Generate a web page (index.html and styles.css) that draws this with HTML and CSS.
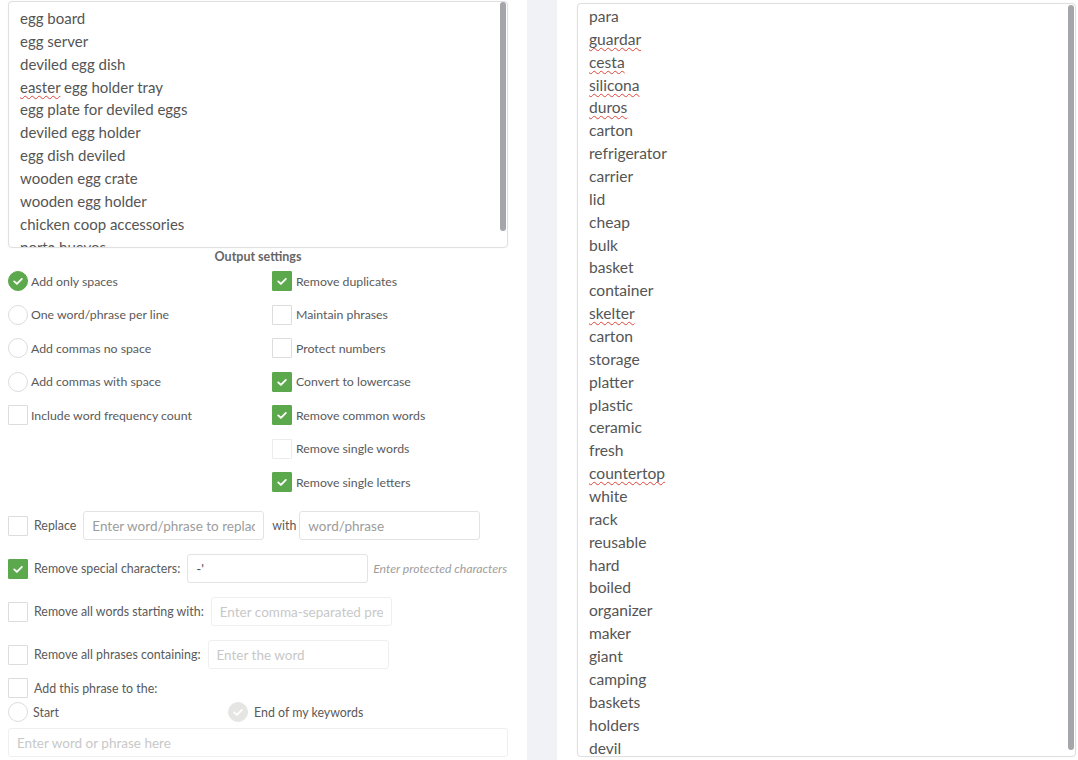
FILE: index.html
```html
<!DOCTYPE html>
<html>
<head>
<meta charset="utf-8">
<link rel="stylesheet" href="styles.css">
</head>
<body>
<div class="page">
  <div class="left">
    <div class="ta-wrap ta-left-wrap">
      <div class="ta ta-left">
        <div>egg board</div>
        <div>egg server</div>
        <div>deviled egg dish</div>
        <div><span class="sp">easter</span> egg holder tray</div>
        <div>egg plate for deviled eggs</div>
        <div>deviled egg holder</div>
        <div>egg dish deviled</div>
        <div>wooden egg crate</div>
        <div>wooden egg holder</div>
        <div>chicken coop accessories</div>
        <div>porta huevos</div>
        <div>egg holder for refrigerator</div>
      </div>
      <div class="thumb thumb-left"></div>
    </div>
    <div class="settings-title">Output settings</div>
    <div class="options">
      <div class="col">
        <label class="opt"><span class="radio on"><svg viewBox="0 0 20 20"><polyline points="5.8,10.4 8.8,13.3 14.3,7.6"/></svg></span>Add only spaces</label>
        <label class="opt"><span class="radio"></span>One word/phrase per line</label>
        <label class="opt"><span class="radio"></span>Add commas no space</label>
        <label class="opt"><span class="radio"></span>Add commas with space</label>
        <label class="opt"><span class="box"></span>Include word frequency count</label>
      </div>
      <div class="col col-r">
        <label class="opt"><span class="box on"><svg viewBox="0 0 20 20"><polyline points="5.8,10.4 8.8,13.3 14.3,7.6"/></svg></span>Remove duplicates</label>
        <label class="opt"><span class="box"></span>Maintain phrases</label>
        <label class="opt"><span class="box"></span>Protect numbers</label>
        <label class="opt"><span class="box on"><svg viewBox="0 0 20 20"><polyline points="5.8,10.4 8.8,13.3 14.3,7.6"/></svg></span>Convert to lowercase</label>
        <label class="opt"><span class="box on"><svg viewBox="0 0 20 20"><polyline points="5.8,10.4 8.8,13.3 14.3,7.6"/></svg></span>Remove common words</label>
        <label class="opt"><span class="box faint"></span>Remove single words</label>
        <label class="opt"><span class="box on"><svg viewBox="0 0 20 20"><polyline points="5.8,10.4 8.8,13.3 14.3,7.6"/></svg></span>Remove single letters</label>
      </div>
    </div>
    <div class="extra">
      <div class="row">
        <span class="box"></span><span class="lbl">Replace</span>
        <input class="field" placeholder="Enter word/phrase to replace">
        <span class="with">with</span>
        <input class="field field-with" placeholder="word/phrase">
      </div>
      <div class="row">
        <span class="box on"><svg viewBox="0 0 20 20"><polyline points="5.8,10.4 8.8,13.3 14.3,7.6"/></svg></span><span class="lbl">Remove special characters:</span>
        <input class="field" value="-'">
        <span class="hint">Enter protected characters</span>
      </div>
      <div class="row">
        <span class="box"></span><span class="lbl">Remove all words starting with:</span>
        <input class="field dim" placeholder="Enter comma-separated prefixes">
      </div>
      <div class="row">
        <span class="box"></span><span class="lbl">Remove all phrases containing:</span>
        <input class="field dim" placeholder="Enter the word">
      </div>
      <div class="row row-add">
        <span class="box"></span><span class="lbl">Add this phrase to the:</span>
      </div>
      <div class="row row-pos">
        <span class="pos"><span class="radio"></span><span class="lbl">Start</span></span>
        <span class="pos"><span class="radio dis"><svg viewBox="0 0 20 20"><polyline points="5.8,10.4 8.8,13.3 14.3,7.6"/></svg></span><span class="lbl">End of my keywords</span></span>
      </div>
      <input class="field dim wide" placeholder="Enter word or phrase here">
    </div>
  </div>
  <div class="gutter"></div>
  <div class="right">
    <div class="ta-wrap ta-right-wrap">
      <div class="ta ta-right">
        <div>para</div>
        <div><span class="sp">guardar</span></div>
        <div><span class="sp">cesta</span></div>
        <div><span class="sp">silicona</span></div>
        <div><span class="sp">duros</span></div>
        <div>carton</div>
        <div>refrigerator</div>
        <div>carrier</div>
        <div>lid</div>
        <div>cheap</div>
        <div>bulk</div>
        <div>basket</div>
        <div>container</div>
        <div><span class="sp">skelter</span></div>
        <div>carton</div>
        <div>storage</div>
        <div>platter</div>
        <div>plastic</div>
        <div>ceramic</div>
        <div>fresh</div>
        <div><span class="sp">countertop</span></div>
        <div>white</div>
        <div>rack</div>
        <div>reusable</div>
        <div>hard</div>
        <div>boiled</div>
        <div>organizer</div>
        <div>maker</div>
        <div>giant</div>
        <div>camping</div>
        <div>baskets</div>
        <div>holders</div>
        <div>devil</div>
        <div>tray</div>
      </div>
      <div class="thumb thumb-right"></div>
    </div>
  </div>
</div>
</body>
</html>
```

FILE: styles.css
```css
* { box-sizing: border-box; }
html, body { margin: 0; padding: 0; background: #fff; }
body {
  font-family: Lato, "Open Sans", sans-serif;
  color: #555;
  width: 1078px;
  height: 760px;
  overflow: hidden;
}
.page { display: flex; height: 760px; }
.left { width: 527px; padding: 1px 19px 0 8px; display: flex; flex-direction: column; }
.gutter { width: 30px; background: #f1f2f5; }
.right { flex: 1; padding: 3px 2px 3px 20px; display: flex; }

.ta-wrap { position: relative; }
.ta-left-wrap { height: 247px; }
.ta-right-wrap { flex: 1; display: flex; }
.ta {
  border: 1px solid #e0e0e0;
  border-radius: 4px;
  box-shadow: 0 0 2px rgba(0,0,0,0.06);
  line-height: 22.86px;
  color: #555;
  overflow: hidden;
  background: #fff;
}
.ta div { white-space: nowrap; }
.ta-left { height: 247px; padding: 5px 12px 0 11px; font-size: 15px; }
.ta-right { flex: 1; padding: 1px 12px 0 11px; font-size: 15.6px; }
.thumb {
  position: absolute;
  width: 6px;
  border-radius: 3px;
  background: #a4a6aa;
}
.thumb-left { right: 2px; top: 1px; height: 229px; }
.thumb-right { right: 2px; top: 2px; height: 745px; }
.sp {
  text-decoration: underline wavy #e0443a;
  text-decoration-thickness: 1px;
  text-underline-offset: 2px;
  text-decoration-skip-ink: none;
}

.settings-title {
  text-align: center;
  font-weight: bold;
  font-size: 12.5px;
  line-height: 16px;
  color: #666;
  margin: 1px 0 6px;
}
.options { display: grid; grid-template-columns: 264px 1fr; }
.col { display: flex; flex-direction: column; gap: 13.5px; }
.opt {
  display: flex;
  align-items: center;
  height: 20px;
  gap: 3px;
  font-size: 12.3px;
  color: #5a5a5a;
  white-space: nowrap;
}
.col-r .opt { gap: 4px; }

.box, .radio {
  flex: none;
  width: 20px;
  height: 20px;
  border: 1px solid #dcdcdc;
  background: #fff;
  display: inline-flex;
  align-items: center;
  justify-content: center;
}
.box { border-radius: 1px; }
.radio { border-radius: 50%; }
.box.faint { border-color: #ececec; }
.box.on, .radio.on { background: #5ca84c; border-color: #5ca84c; }
.radio.dis { background: #e5e5e3; border-color: #e5e5e3; }
.box svg, .radio svg { width: 20px; height: 20px; }
.box polyline, .radio polyline {
  fill: none;
  stroke: #fff;
  stroke-width: 2;
  stroke-linecap: round;
  stroke-linejoin: round;
}

.extra { margin-top: 19px; display: flex; flex-direction: column; }
.row {
  display: flex;
  align-items: center;
  height: 29px;
  margin-bottom: 14px;
  font-size: 12.4px;
  color: #5a5a5a;
  white-space: nowrap;
}
.row .lbl { margin-left: 6px; margin-right: 7px; }
.with { margin: 0 3px 0 8px; }
.field {
  width: 181px;
  height: 29px;
  border: 1px solid #e3e3e3;
  border-radius: 3px;
  padding: 0 8px;
  font-family: Lato, "Open Sans", sans-serif;
  font-size: 13.5px;
  color: #555;
  background: #fff;
  outline: none;
}
.field::placeholder { color: #9c9c9c; }
.field.dim { border-color: #efefef; }
.field.dim::placeholder { color: #c8c8c8; }
.hint {
  margin-left: 5px;
  font-style: italic;
  font-size: 12.2px;
  color: #9e9e9e;
}
.row-add { height: 20px; margin: -5px 0 4px; }
.row-pos { height: 20px; margin-bottom: 6px; }
.pos { display: flex; align-items: center; width: 220px; }
.pos .lbl { margin-left: 5px; }
.pos + .pos .lbl { margin-left: 6px; }
.field.wide { width: 500px; padding-left: 8px; }
```
